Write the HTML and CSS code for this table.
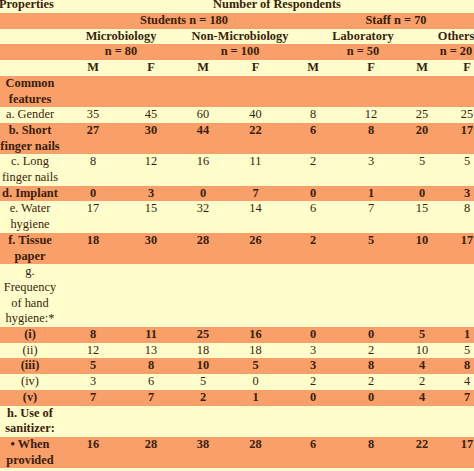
FILE: index.html
```html
<!DOCTYPE html>
<html>
<head>
<meta charset="utf-8">
<link rel="stylesheet" href="styles.css">
</head>
<body>
<div class="table">
  <div class="row cream b top">
    <div class="cell left">Properties</div>
    <div class="cell">Number of Respondents</div>
  </div>
  <div class="row orange b grp1">
    <div class="cell"></div>
    <div class="cell">Students n = 180</div>
    <div class="cell">Staff n = 70</div>
  </div>
  <div class="row cream b grp2">
    <div class="cell"></div>
    <div class="cell">Microbiology</div>
    <div class="cell">Non-Microbiology</div>
    <div class="cell">Laboratory</div>
    <div class="cell">Others</div>
  </div>
  <div class="row orange b grp2">
    <div class="cell"></div>
    <div class="cell">n = 80</div>
    <div class="cell">n = 100</div>
    <div class="cell">n = 50</div>
    <div class="cell">n = 20</div>
  </div>
  <div class="row cream b data">
    <div class="cell"></div>
    <div class="cell">M</div><div class="cell">F</div>
    <div class="cell">M</div><div class="cell">F</div>
    <div class="cell">M</div><div class="cell">F</div>
    <div class="cell">M</div><div class="cell">F</div>
  </div>
  <div class="row orange b data">
    <div class="cell">Common<br>features</div>
  </div>
  <div class="row cream data">
    <div class="cell">a. Gender</div>
    <div class="cell">35</div><div class="cell">45</div><div class="cell">60</div><div class="cell">40</div>
    <div class="cell">8</div><div class="cell">12</div><div class="cell">25</div><div class="cell">25</div>
  </div>
  <div class="row orange b data">
    <div class="cell">b. Short<br>finger nails</div>
    <div class="cell">27</div><div class="cell">30</div><div class="cell">44</div><div class="cell">22</div>
    <div class="cell">6</div><div class="cell">8</div><div class="cell">20</div><div class="cell">17</div>
  </div>
  <div class="row cream data">
    <div class="cell">c. Long<br>finger nails</div>
    <div class="cell">8</div><div class="cell">12</div><div class="cell">16</div><div class="cell">11</div>
    <div class="cell">2</div><div class="cell">3</div><div class="cell">5</div><div class="cell">5</div>
  </div>
  <div class="row orange b data">
    <div class="cell">d. Implant</div>
    <div class="cell">0</div><div class="cell">3</div><div class="cell">0</div><div class="cell">7</div>
    <div class="cell">0</div><div class="cell">1</div><div class="cell">0</div><div class="cell">3</div>
  </div>
  <div class="row cream data">
    <div class="cell">e. Water<br>hygiene</div>
    <div class="cell">17</div><div class="cell">15</div><div class="cell">32</div><div class="cell">14</div>
    <div class="cell">6</div><div class="cell">7</div><div class="cell">15</div><div class="cell">8</div>
  </div>
  <div class="row orange b data">
    <div class="cell">f. Tissue<br>paper</div>
    <div class="cell">18</div><div class="cell">30</div><div class="cell">28</div><div class="cell">26</div>
    <div class="cell">2</div><div class="cell">5</div><div class="cell">10</div><div class="cell">17</div>
  </div>
  <div class="row cream data">
    <div class="cell">g.<br>Frequency<br>of hand<br>hygiene:*</div>
  </div>
  <div class="row orange b data">
    <div class="cell">(i)</div>
    <div class="cell">8</div><div class="cell">11</div><div class="cell">25</div><div class="cell">16</div>
    <div class="cell">0</div><div class="cell">0</div><div class="cell">5</div><div class="cell">1</div>
  </div>
  <div class="row cream data">
    <div class="cell">(ii)</div>
    <div class="cell">12</div><div class="cell">13</div><div class="cell">18</div><div class="cell">18</div>
    <div class="cell">3</div><div class="cell">2</div><div class="cell">10</div><div class="cell">5</div>
  </div>
  <div class="row orange b data">
    <div class="cell">(iii)</div>
    <div class="cell">5</div><div class="cell">8</div><div class="cell">10</div><div class="cell">5</div>
    <div class="cell">3</div><div class="cell">8</div><div class="cell">4</div><div class="cell">8</div>
  </div>
  <div class="row cream data">
    <div class="cell">(iv)</div>
    <div class="cell">3</div><div class="cell">6</div><div class="cell">5</div><div class="cell">0</div>
    <div class="cell">2</div><div class="cell">2</div><div class="cell">2</div><div class="cell">4</div>
  </div>
  <div class="row orange b data">
    <div class="cell">(v)</div>
    <div class="cell">7</div><div class="cell">7</div><div class="cell">2</div><div class="cell">1</div>
    <div class="cell">0</div><div class="cell">0</div><div class="cell">4</div><div class="cell">7</div>
  </div>
  <div class="row cream b data">
    <div class="cell">h. Use of<br>sanitizer:</div>
  </div>
  <div class="row orange b data">
    <div class="cell">&#8226; When<br>provided</div>
    <div class="cell">16</div><div class="cell">28</div><div class="cell">38</div><div class="cell">28</div>
    <div class="cell">6</div><div class="cell">8</div><div class="cell">22</div><div class="cell">17</div>
  </div>
</div>
</body>
</html>
```

FILE: styles.css
```css
html, body {
  margin: 0;
  padding: 0;
  overflow: hidden;
  background: #fffdcc;
}
.table {
  width: 491px;
  margin-left: -2px;
  margin-top: -2.7px;
  font-family: "Liberation Serif", "Times New Roman", serif;
  font-size: 12.4px;
  line-height: 15.7px;
  color: #3b1e0b;
}
.row {
  display: grid;
}
.cream { background: #fffdcc; }
.orange { background: #f99f69; }
.b { font-weight: bold; }
.cell {
  text-align: center;
  white-space: nowrap;
}
.cell.left {
  text-align: left;
  padding-left: 1px;
}
.top { grid-template-columns: 67px 424px; }
.grp1 { grid-template-columns: 67px 238px 186px; }
.grp2 { grid-template-columns: 67px 112px 126px 120px 66px; }
.data { grid-template-columns: 64px 62px 54px 50px 55px 60px 56px 46px 44px; }
```
